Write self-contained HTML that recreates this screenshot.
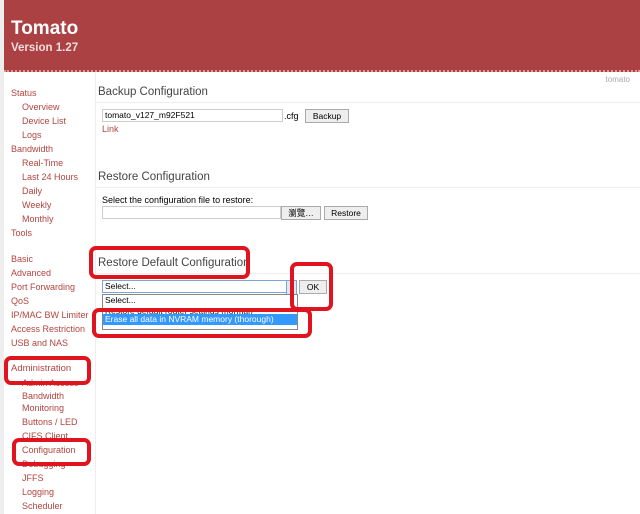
<!DOCTYPE html><html><head><style>
body{margin:0;width:640px;height:514px;background:#fff;font-family:"Liberation Sans",sans-serif;position:relative;overflow:hidden}
.hd{position:absolute;left:4px;top:0;width:636px;height:70px;background:#ab4143;border-bottom:2px dotted #d99}
.hd .t{position:absolute;left:7px;top:18px;color:#fff;font-size:19px;font-weight:bold}
.hd .v{position:absolute;left:7px;top:42px;color:#f1dcdc;font-size:11.5px;font-weight:bold}
.lb{position:absolute;left:0;top:0;width:4px;height:514px;background:#eee}
.sb{position:absolute;left:4px;top:72px;width:91px;height:442px;border-right:1px solid #eee}
.a{position:absolute;font-size:9px;color:#b2443f;white-space:nowrap}
.s{left:7px}.i{left:18px}
.c{position:absolute;font-size:9px;color:#000}
h2{position:absolute;margin:0;font-weight:normal;font-size:11.5px;color:#444;left:98px}
.hr{position:absolute;left:96px;width:544px;height:1px;background:#eee}
.in{position:absolute;border:1px solid #ccc;height:11px;background:#fff;font-size:8.5px;line-height:11px;padding-left:2px}
.bt{position:absolute;border:1px solid #aaa;background:#eee;font-size:8.5px;text-align:center;line-height:12px;height:12px}
.r{position:absolute;border:4px solid #e0141e;border-radius:7px}
</style></head><body>
<div class="lb"></div>
<div class="hd"><div class="t">Tomato</div><div class="v">Version 1.27</div></div>
<div class="a" style="right:10px;top:75px;color:#aaa;font-size:8px">tomato</div>
<div class="sb">
<div class="a s" style="top:16px">Status</div>
<div class="a i" style="top:30px">Overview</div>
<div class="a i" style="top:44px">Device List</div>
<div class="a i" style="top:58px">Logs</div>
<div class="a s" style="top:72px">Bandwidth</div>
<div class="a i" style="top:86px">Real-Time</div>
<div class="a i" style="top:100px">Last 24 Hours</div>
<div class="a i" style="top:114px">Daily</div>
<div class="a i" style="top:128px">Weekly</div>
<div class="a i" style="top:142px">Monthly</div>
<div class="a s" style="top:156px">Tools</div>
<div class="a s" style="top:182px">Basic</div>
<div class="a s" style="top:196px">Advanced</div>
<div class="a s" style="top:210px">Port Forwarding</div>
<div class="a s" style="top:224px">QoS</div>
<div class="a s" style="top:238px">IP/MAC BW Limiter</div>
<div class="a s" style="top:252px">Access Restriction</div>
<div class="a s" style="top:266px">USB and NAS</div>
<div class="a s" style="top:291px;font-size:9.5px">Administration</div>
<div class="a i" style="top:306px">Admin Access</div>
<div class="a i" style="top:319px">Bandwidth</div>
<div class="a i" style="top:331px">Monitoring</div>
<div class="a i" style="top:345px">Buttons / LED</div>
<div class="a i" style="top:359px">CIFS Client</div>
<div class="a i" style="top:373px">Configuration</div>
<div class="a i" style="top:387px">Debugging</div>
<div class="a i" style="top:401px">JFFS</div>
<div class="a i" style="top:415px">Logging</div>
<div class="a i" style="top:429px">Scheduler</div>
</div>
<h2 style="top:86px">Backup Configuration</h2><div class="hr" style="top:102px"></div>
<div class="in" style="left:102px;top:109px;width:177px">tomato_v127_m92F521</div>
<div class="c" style="left:284px;top:111px">.cfg</div>
<div class="bt" style="left:305px;top:109px;width:42px">Backup</div>
<div class="a" style="left:102px;top:124px">Link</div>
<h2 style="top:171px">Restore Configuration</h2><div class="hr" style="top:187px"></div>
<div class="c" style="left:102px;top:195px">Select the configuration file to restore:</div>
<div class="in" style="left:102px;top:206px;width:175px"></div>
<div class="bt" style="left:281px;top:206px;width:38px">瀏覽…</div>
<div class="bt" style="left:324px;top:206px;width:42px">Restore</div>
<h2 style="top:257px">Restore Default Configuration</h2><div class="hr" style="top:273px"></div>
<div class="in" style="left:102px;top:280px;width:182px;border-color:#7aa7d6">Select...</div>
<div style="position:absolute;left:286px;top:280px;width:9px;height:13px;background:#dde8f4;border:1px solid #7aa7d6"></div>
<div class="bt" style="left:299px;top:280px;width:26px">OK</div>
<div style="position:absolute;left:102px;top:294px;width:194px;height:34px;border:1px solid #888;background:#fff;font-size:8.5px">
<div style="padding-left:2px;line-height:11px">Select...</div>
<div style="padding-left:2px;line-height:10px;color:#222;height:8px;overflow:hidden">Restore default router settings (normal)</div>
<div style="padding-left:2px;line-height:11px;background:#3399ff;color:#fff">Erase all data in NVRAM memory (thorough)</div>
</div>
<div class="r" style="left:89px;top:246px;width:153px;height:25px"></div>
<div class="r" style="left:290px;top:262px;width:35px;height:41px"></div>
<div class="r" style="left:92px;top:308px;width:212px;height:22px"></div>
<div class="r" style="left:4px;top:356px;width:79px;height:21px"></div>
<div class="r" style="left:12px;top:438px;width:71px;height:20px"></div>
</body></html>
